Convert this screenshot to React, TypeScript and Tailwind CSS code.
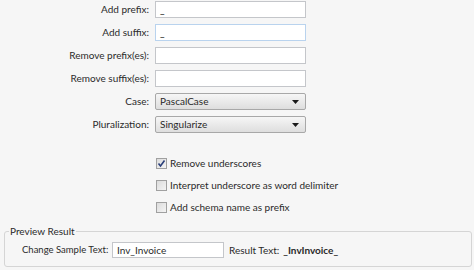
import React from 'react';

const font = { fontFamily: 'Lato, "Open Sans", sans-serif' };

function TextRow({ label, value, focused }: { label: string; value?: string; focused?: boolean }) {
  return (
    <div className="flex items-center h-[17px]">
      <div className="w-[150px] pr-[1px] text-right text-[10px] text-[#2a2a2a]">{label}</div>
      <div
        className={`ml-[5px] w-[151px] h-[17px] bg-white border flex items-center px-[4px] text-[10px] ${
          focused ? 'border-[#b9d3ee]' : 'border-[#c4c6ca]'
        }`}
      >
        {value}
      </div>
    </div>
  );
}

function SelectRow({ label, value }: { label: string; value: string }) {
  return (
    <div className="flex items-center h-[17px]">
      <div className="w-[150px] pr-[1px] text-right text-[10px] text-[#2a2a2a]">{label}</div>
      <div className="ml-[5px] w-[151px] h-[17px] rounded-[2px] border border-[#a8a8a8] bg-gradient-to-b from-[#f6f6f6] to-[#dedede] flex items-center justify-between pl-[4px] pr-[6px] text-[10px] text-[#2a2a2a]">
        <span>{value}</span>
        <svg width="7" height="4" viewBox="0 0 7 4">
          <path d="M0 0 L7 0 L3.5 4 Z" fill="#1a1a1a" />
        </svg>
      </div>
    </div>
  );
}

function Check({ label, checked }: { label: string; checked?: boolean }) {
  return (
    <div className="flex items-center h-[13px] gap-[3px]">
      <div className="w-[11px] h-[11px] border border-[#a0a0a0] bg-gradient-to-br from-[#dcdcdc] to-[#f4f4f4] flex items-center justify-center">
        {checked && (
          <svg width="9" height="9" viewBox="0 0 9 9">
            <path d="M1.5 4.5 L3.5 7 L7.5 1.5" stroke="#2a3f7a" strokeWidth="1.6" fill="none" />
          </svg>
        )}
      </div>
      <span className="text-[10px] text-[#2a2a2a]">{label}</span>
    </div>
  );
}

export default function App() {
  return (
    <div className="w-[474px] h-[270px] bg-[#f6f6f6] overflow-hidden relative" style={font}>
      {/* Naming options */}
      <div className="pt-[1px] flex flex-col gap-[6px]">
        <TextRow label="Add prefix:" value="_" />
        <TextRow label="Add suffix:" value="_" focused />
        <TextRow label="Remove prefix(es):" />
        <TextRow label="Remove suffix(es):" />
        <SelectRow label="Case:" value="PascalCase" />
        <SelectRow label="Pluralization:" value="Singularize" />
      </div>

      <div className="mt-[24px] ml-[156px] flex flex-col gap-[9px]">
        <Check label="Remove underscores" checked />
        <Check label="Interpret underscore as word delimiter" />
        <Check label="Add schema name as prefix" />
      </div>

      {/* Preview group box */}
      <fieldset className="absolute left-[4px] top-[224px] w-[468px] h-[43px] border border-[#d5d5d5] rounded-[3px] px-[4px] m-0">
        <legend className="px-[1px] text-[10px] text-[#2a2a2a] leading-[14px]">Preview Result</legend>
        <div className="flex items-center mt-[4px] text-[10px] text-[#2a2a2a]">
          <span className="ml-[13px] w-[90px] shrink-0 whitespace-nowrap text-[9.5px]">Change Sample Text:</span>
          <div className="w-[112px] h-[16px] shrink-0 bg-white border border-[#c4c6ca] flex items-center px-[4px]">Inv_Invoice</div>
          <span className="ml-[5px]">Result Text:</span>
          <span className="ml-[4px] font-bold">_InvInvoice_</span>
        </div>
      </fieldset>
    </div>
  );
}
